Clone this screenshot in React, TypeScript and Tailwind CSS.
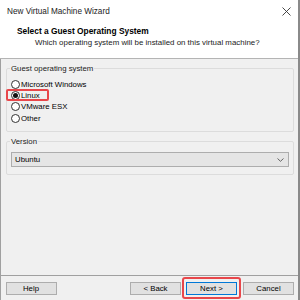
import React from 'react';

const font = { fontFamily: '"Liberation Sans", Arial, sans-serif' };

const options = ['Microsoft Windows', 'Linux', 'VMware ESX', 'Other'];

const Radio: React.FC<{ label: string; checked?: boolean }> = ({ label, checked }) => (
  <div className="relative flex items-center h-[11.3px]">
    <span className="ml-[1px] w-[9px] h-[9px] rounded-full border border-[#333] bg-white flex items-center justify-center">
      {checked && <span className="w-[5px] h-[5px] rounded-full bg-[#111]" />}
    </span>
    <span className="ml-[1px] text-[7.8px] leading-[11px] text-black">{label}</span>
    {checked && (
      <span className="absolute left-[-4px] top-[-0.5px] w-[43px] h-[12px] rounded-[2px] border-2 border-[#e8474b]" />
    )}
  </div>
);

const Button: React.FC<{ label: string; primary?: boolean; className?: string }> = ({ label, primary, className }) => (
  <div
    className={`relative h-[13px] flex items-center justify-center text-[7.8px] text-black bg-[#e1e1e1] border ${
      primary ? 'border-[#0078d7]' : 'border-[#adadad]'
    } ${className ?? ''}`}
  >
    {label}
    {primary && (
      <span className="absolute left-[-5px] right-[-5px] top-[-6px] bottom-[-5px] rounded-[3px] border-2 border-[#e8474b]" />
    )}
  </div>
);

export default function App() {
  return (
    <div style={font} className="w-[300px] h-[300px] flex flex-col bg-[#f0f0f0] border-r-2 border-[#8a8a8a] overflow-hidden">
      {/* title + header */}
      <div className="h-[59px] bg-white border-b border-[#b4b4b4] shrink-0">
        <div className="h-[23px] flex items-center justify-between pl-[7px] pr-[6px]">
          <span className="text-[8.2px] leading-[11px] text-[#222]">New Virtual Machine Wizard</span>
          <svg width="9" height="9" viewBox="0 0 9 9" className="mr-[1px]">
            <path d="M0.5 0.5 L8.5 8.5 M8.5 0.5 L0.5 8.5" stroke="#333" strokeWidth="0.9" />
          </svg>
        </div>
        <div className="mt-[3px] pl-[17px] text-[8.4px] leading-[11px] font-bold text-black">
          Select a Guest Operating System
        </div>
        <div className="pl-[35px] text-[7.9px] leading-[11px] text-[#222]">
          Which operating system will be installed on this virtual machine?
        </div>
      </div>

      {/* body */}
      <div className="flex-1 flex flex-col border-l border-[#a0a0a0]">
        <fieldset className="mt-[3.5px] ml-[5px] mr-[4px] px-[3px] pb-[7px] border border-[#dcdcdc] rounded-[2px]">
          <legend className="px-[1px] text-[7.8px] leading-[11px] text-[#222]">Guest operating system</legend>
          <div className="flex flex-col mt-[5px]">
            {options.map((o) => (
              <Radio key={o} label={o} checked={o === 'Linux'} />
            ))}
          </div>
        </fieldset>

        <fieldset className="mt-[4px] ml-[5px] mr-[4px] px-[3px] pb-[7px] border border-[#dcdcdc] rounded-[2px]">
          <legend className="px-[1px] text-[7.8px] leading-[11px] text-[#222]">Version</legend>
          <div className="mt-[5.5px] mx-[1px] h-[15px] flex items-center justify-between bg-[#e5e5e5] border border-[#adadad] pl-[3px] pr-[4px]">
            <span className="text-[7.8px] text-black">Ubuntu</span>
            <svg width="7" height="4" viewBox="0 0 7 4">
              <path d="M0.5 0.5 L3.5 3.3 L6.5 0.5" stroke="#555" strokeWidth="0.9" fill="none" />
            </svg>
          </div>
        </fieldset>

        <div className="flex-1" />

        {/* footer */}
        <div className="h-[25px] border-t border-[#a0a0a0] pt-[6px] pl-[4.5px] pr-[4px] flex items-start">
          <Button label="Help" className="w-[51px]" />
          <div className="flex-1" />
          <Button label="< Back" className="w-[51px]" />
          <Button label="Next >" primary className="w-[51px] ml-[5px]" />
          <Button label="Cancel" className="w-[51px] ml-[6px]" />
        </div>
      </div>
    </div>
  );
}
